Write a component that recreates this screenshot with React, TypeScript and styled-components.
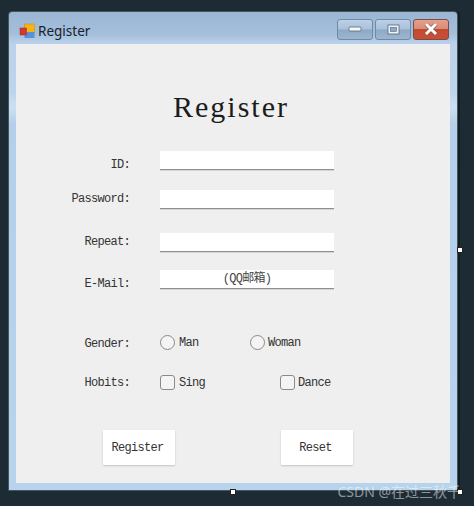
import React from "react";
import styled, { createGlobalStyle } from "styled-components";

const GlobalStyle = createGlobalStyle`
  html, body {
    margin: 0;
    padding: 0;
    background: #1d2b35;
  }
`;

const Desktop = styled.div`
  position: relative;
  width: 474px;
  height: 506px;
  padding: 11px 0 0 8px;
  box-sizing: border-box;
  overflow: hidden;
  background: #1d2b35;
`;

// Khung cửa sổ kiểu Aero
const Frame = styled.div`
  width: 450px;
  height: 480px;
  box-sizing: border-box;
  display: flex;
  flex-direction: column;
  border: 1px solid #46545e;
  border-radius: 4px 4px 0 0;
  padding: 0 7px 7px 7px;
  box-shadow: 2px 0 0 #111c23;
  background: linear-gradient(
    180deg,
    #9ab6d3 0,
    #a5bfdb 22px,
    #bbd2ea 32px,
    #bcd4ec 80px,
    #cde0f2 95px,
    #b4cfe9 112px,
    #b8d3ec 100%
  );
`;

const TitleBar = styled.div`
  height: 32px;
  flex: none;
  display: flex;
  align-items: center;
  justify-content: space-between;
  padding: 2px 1px 0 3px;
  box-sizing: border-box;
`;

const TitleLeft = styled.div`
  display: flex;
  align-items: center;
  gap: 3px;
  padding-top: 4px;
  font-family: "Noto Sans", sans-serif;
  font-size: 13.5px;
  color: #16222e;
`;

const WindowButtons = styled.div`
  display: flex;
  gap: 2px;
`;

const WindowButton = styled.div<{ $close?: boolean }>`
  width: 36px;
  height: 21px;
  box-sizing: border-box;
  display: flex;
  align-items: center;
  justify-content: center;
  border: 1px solid ${(p) => (p.$close ? "#7d4a45" : "#6f8aa6")};
  border-radius: 3px;
  background: ${(p) =>
    p.$close
      ? "linear-gradient(180deg, #e59f8b 0, #d98d78 45%, #c44a2e 50%, #c5503a 100%)"
      : "linear-gradient(180deg, #bcd0e6 0, #a9c1da 48%, #8ea9c5 52%, #9db6d0 100%)"};
`;

const Client = styled.div`
  flex: 1;
  background: #efefef;
  padding-top: 48px;
  font-family: "Liberation Mono", monospace;
  font-size: 12px;
  letter-spacing: -0.7px;
  line-height: 14px;
  color: #333;
`;

const Heading = styled.div`
  height: 30px;
  margin-bottom: 29px;
  padding-right: 4px;
  text-align: center;
  font-family: "Liberation Serif", serif;
  font-size: 30px;
  letter-spacing: 2px;
  line-height: 30px;
  color: #1c1c1c;
`;

const Row = styled.div<{ $top?: number }>`
  display: grid;
  grid-template-columns: 114px 1fr;
  column-gap: 30px;
  align-items: start;
  margin-top: ${(p) => p.$top ?? 0}px;
`;

const Label = styled.div<{ $pad?: number }>`
  text-align: right;
  padding-top: ${(p) => p.$pad ?? 0}px;
`;

const TextBox = styled.div`
  width: 174px;
  height: 19px;
  box-sizing: border-box;
  background: #fff;
  border-bottom: 1px solid #8f8f8f;
  box-shadow: 0 1px 0 #d4d4d4;
  text-align: center;
  line-height: 18px;
  color: #444;
`;

const CjkMix = styled.span`
  font-family: "Liberation Mono", "Noto Sans CJK SC", monospace;
`;

const Options = styled.div`
  display: flex;
  align-items: center;
`;

const Option = styled.div<{ $width: number; $gap?: number }>`
  width: ${(p) => p.$width}px;
  display: flex;
  align-items: center;
  gap: ${(p) => p.$gap ?? 4}px;
`;

const Radio = styled.span`
  width: 15px;
  height: 15px;
  box-sizing: border-box;
  border: 1px solid #8a8a8a;
  border-radius: 50%;
  background: #f4f4f4;
`;

const Check = styled.span`
  width: 15px;
  height: 15px;
  box-sizing: border-box;
  border: 1px solid #8a8a8a;
  border-radius: 3px;
  background: #f4f4f4;
`;

const Buttons = styled.div`
  display: flex;
  gap: 106px;
  margin: 40px 0 0 87px;
`;

const PushButton = styled.div`
  width: 72px;
  height: 35px;
  box-sizing: border-box;
  display: flex;
  align-items: center;
  justify-content: center;
  padding-right: 3px;
  background: #fff;
  border-radius: 1px;
  box-shadow: 0 1px 2px rgba(0, 0, 0, 0.18);
`;

// Ô vuông kéo giãn của trình thiết kế
const Handle = styled.span<{ $x: number; $y: number }>`
  position: absolute;
  left: ${(p) => p.$x}px;
  top: ${(p) => p.$y}px;
  width: 6px;
  height: 6px;
  background: #fff;
  border: 1px solid #222;
  box-sizing: border-box;
`;

const Watermark = styled.div`
  position: absolute;
  right: 13px;
  bottom: 6px;
  font-family: "Noto Sans", "Noto Sans CJK SC", sans-serif;
  font-size: 14px;
  line-height: 16px;
  color: rgba(255, 255, 255, 0.5);
`;

const AppIcon = () => (
  <svg width="16" height="16" viewBox="0 0 16 16">
    <rect x="5.5" y="1" width="10" height="9" fill="#f2b417" stroke="#c98a12" strokeWidth="0.5" />
    <rect x="5.5" y="9" width="10" height="6" fill="#5b8fd9" />
    <rect x="1" y="5" width="6.5" height="7" fill="#cf3a32" stroke="#a62a24" strokeWidth="0.5" />
  </svg>
);

const MinGlyph = () => (
  <svg width="14" height="6" viewBox="0 0 14 6">
    <rect x="1" y="1" width="12" height="4" rx="1" fill="#f4f6f8" stroke="#55677a" strokeWidth="0.8" />
  </svg>
);

const MaxGlyph = () => (
  <svg width="13" height="11" viewBox="0 0 13 11">
    <rect x="1" y="1" width="11" height="9" fill="#eef2f6" stroke="#55677a" strokeWidth="0.8" />
    <rect x="3.5" y="3.5" width="6" height="4" fill="#8ea9c5" stroke="#55677a" strokeWidth="0.6" />
  </svg>
);

const CloseGlyph = () => (
  <svg width="14" height="12" viewBox="0 0 14 12">
    <path d="M2 1 L12 11 M12 1 L2 11" stroke="#7a4038" strokeWidth="4" />
    <path d="M2 1 L12 11 M12 1 L2 11" stroke="#fff" strokeWidth="3" />
  </svg>
);

const App = () => {
  return (
    <Desktop>
      <GlobalStyle />
      <Frame>
        <TitleBar>
          <TitleLeft>
            <AppIcon />
            Register
          </TitleLeft>
          <WindowButtons>
            <WindowButton>
              <MinGlyph />
            </WindowButton>
            <WindowButton>
              <MaxGlyph />
            </WindowButton>
            <WindowButton $close>
              <CloseGlyph />
            </WindowButton>
          </WindowButtons>
        </TitleBar>
        <Client>
          <Heading>Register</Heading>
          <Row>
            <Label $pad={7}>ID:</Label>
            <TextBox />
          </Row>
          <Row $top={18}>
            <Label $pad={2}>Password:</Label>
            <TextBox />
          </Row>
          <Row $top={24}>
            <Label $pad={2}>Repeat:</Label>
            <TextBox />
          </Row>
          <Row $top={18}>
            <Label $pad={7}>E-Mail:</Label>
            <TextBox>
              <CjkMix>(QQ邮箱)</CjkMix>
            </TextBox>
          </Row>
          <Row $top={44}>
            <Label $pad={2}>Gender:</Label>
            <Options>
              <Option $width={90}>
                <Radio />
                Man
              </Option>
              <Option $width={90} $gap={3}>
                <Radio />
                Woman
              </Option>
            </Options>
          </Row>
          <Row $top={24}>
            <Label $pad={1}>Hobits:</Label>
            <Options>
              <Option $width={120}>
                <Check />
                Sing
              </Option>
              <Option $width={90} $gap={3}>
                <Check />
                Dance
              </Option>
            </Options>
          </Row>
          <Buttons>
            <PushButton>Register</PushButton>
            <PushButton>Reset</PushButton>
          </Buttons>
        </Client>
      </Frame>
      <Handle $x={230} $y={489} />
      <Handle $x={457} $y={247} />
      <Handle $x={457} $y={489} />
      <Watermark>CSDN @在过三秋千</Watermark>
    </Desktop>
  );
};

export default App;
